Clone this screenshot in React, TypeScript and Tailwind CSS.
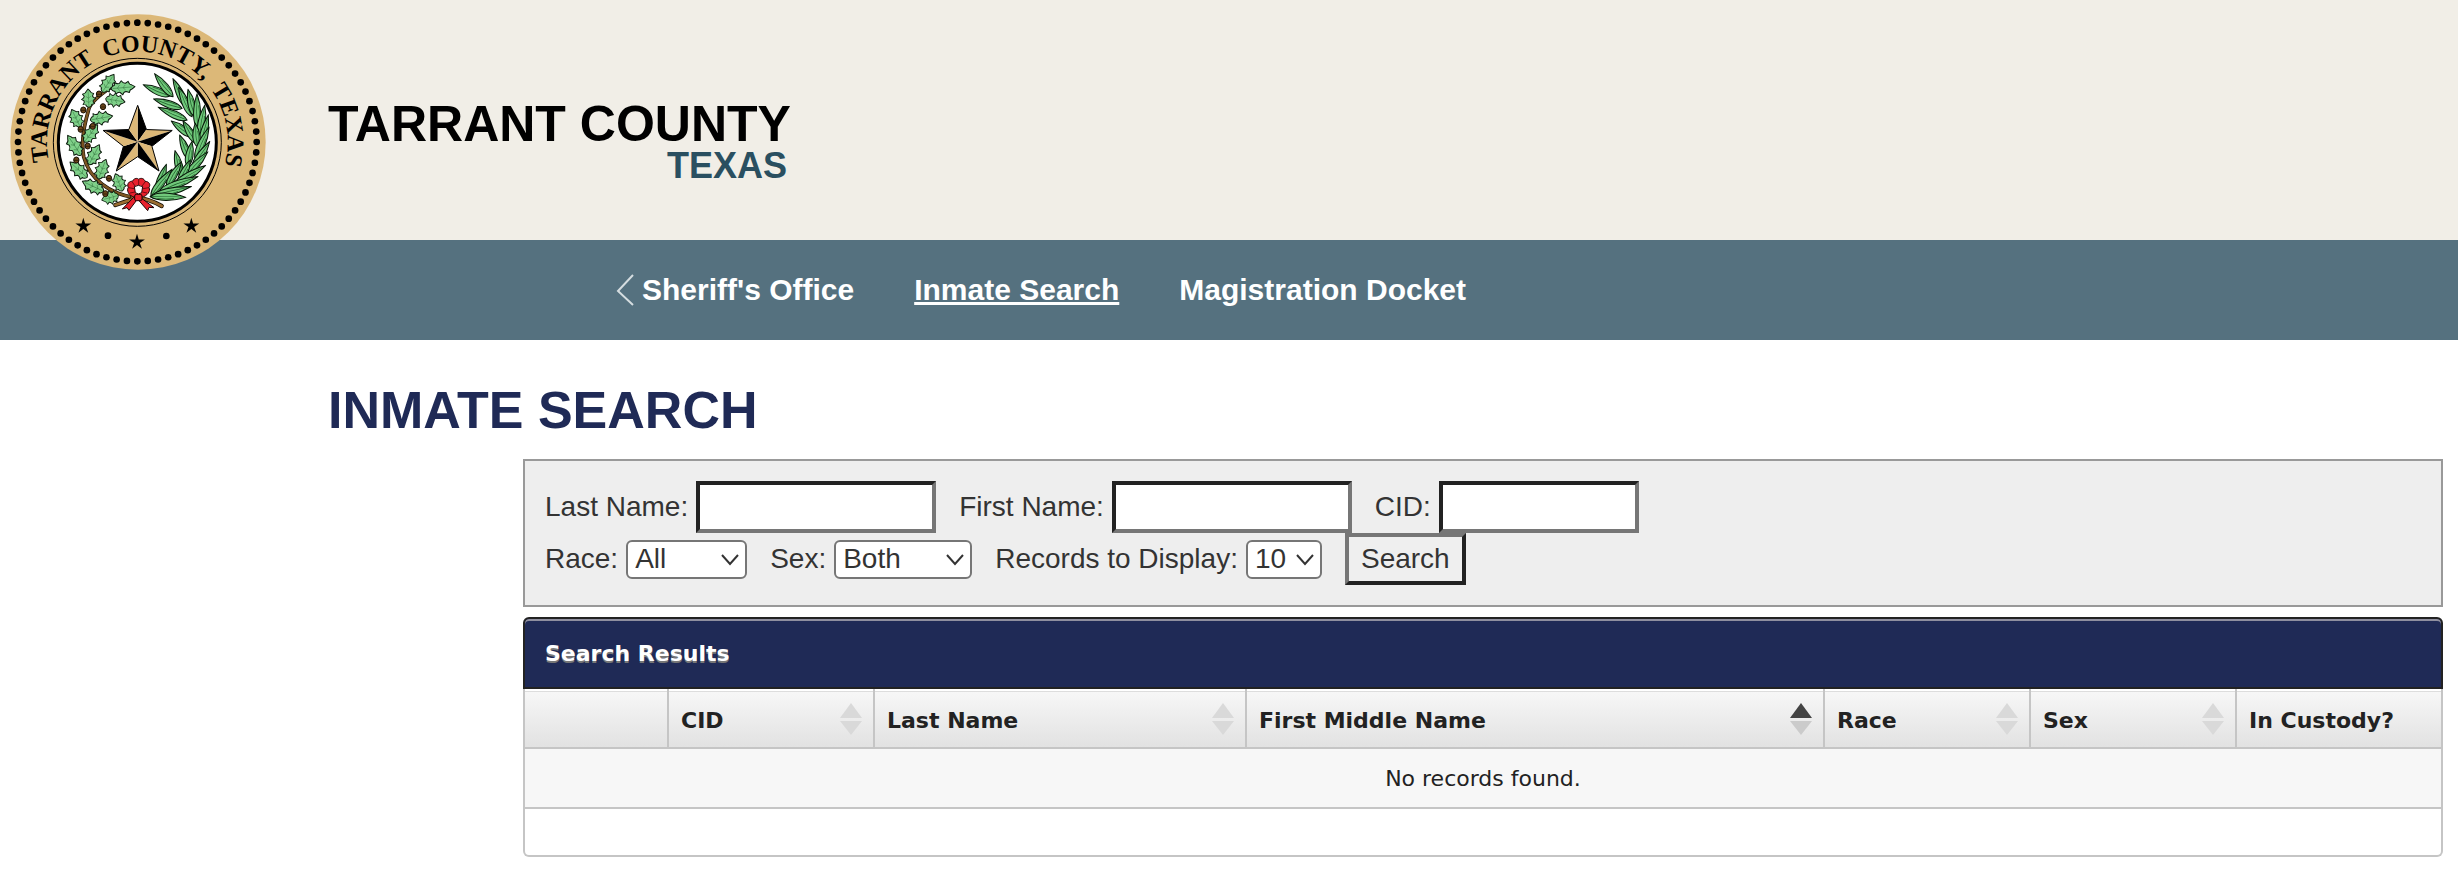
import React, { useState } from "react";

interface Column {
  label: string;
  width: string;
  sortable: boolean;
}

// [baseX, baseY, tipX, tipY]
type Leaf = [number, number, number, number];

const columns: Column[] = [
  { label: "", width: "w-36", sortable: false },
  { label: "CID", width: "w-[206px]", sortable: true },
  { label: "Last Name", width: "w-[372px]", sortable: true },
  { label: "First Middle Name", width: "", sortable: true },
  { label: "Race", width: "w-[206px]", sortable: true },
  { label: "Sex", width: "w-[206px]", sortable: true },
  { label: "In Custody?", width: "w-[208px]", sortable: false },
];

const oakLeaves: Leaf[] = [
  [306, 276, 341, 223],
  [332, 266, 404, 260],
  [316, 296, 374, 306],
  [266, 322, 263, 267],
  [270, 360, 337, 348],
  [240, 381, 214, 328],
  [252, 426, 292, 374],
  [242, 466, 202, 406],
  [266, 494, 297, 434],
  [260, 533, 209, 486],
  [294, 537, 317, 478],
  [310, 574, 246, 544],
  [366, 573, 345, 521],
  [354, 586, 304, 600],
];

const acorns = [
  [296, 282],
  [308, 320],
  [249, 330],
  [241, 388],
  [277, 379],
  [262, 438],
  [228, 480],
  [326, 535],
  [315, 581],
];

const oliveLeaves: Leaf[] = [
  [508, 288, 429, 254],
  [518, 290, 463, 221],
  [545, 325, 460, 297],
  [560, 322, 518, 236],
  [560, 360, 474, 322],
  [575, 350, 535, 262],
  [584, 350, 563, 268],
  [592, 385, 590, 282],
  [578, 410, 513, 363],
  [598, 410, 613, 316],
  [590, 430, 548, 362],
  [600, 450, 624, 345],
  [592, 440, 585, 370],
  [585, 480, 626, 382],
  [570, 480, 538, 405],
  [575, 510, 628, 425],
  [562, 500, 575, 425],
  [545, 530, 524, 452],
  [548, 540, 622, 456],
  [535, 555, 570, 480],
  [515, 560, 615, 497],
  [500, 560, 543, 486],
  [475, 575, 592, 530],
  [470, 575, 498, 493],
  [452, 588, 515, 508],
  [452, 590, 572, 560],
  [450, 590, 556, 592],
];

function leafTransform([x1, y1, x2, y2]: Leaf, thickness: number) {
  const length = Math.hypot(x2 - x1, y2 - y1);
  const angle = (Math.atan2(y2 - y1, x2 - x1) * 180) / Math.PI;
  return `translate(${x1} ${y1}) rotate(${angle}) scale(${length / 60} ${thickness})`;
}

function starPoints(cx: number, cy: number, outer: number, inner: number) {
  return Array.from({ length: 10 }, (_, i) => {
    const r = i % 2 === 0 ? outer : inner;
    const a = (i * Math.PI) / 5 - Math.PI / 2;
    return [cx + r * Math.cos(a), cy + r * Math.sin(a)];
  });
}

const CountySeal = () => {
  const star = starPoints(412, 425, 109, 45);
  const smallStars = [
    [249, 678],
    [573, 678],
    [410, 726],
  ];

  return (
    <svg
      viewBox="29 42 768 768"
      className="h-64 w-64"
      role="img"
      aria-label="Tarrant County seal"
    >
      <circle cx="413" cy="426" r="383" fill="#dcb878" />
      {Array.from({ length: 72 }, (_, i) => {
        const a = (i * Math.PI) / 36;
        return (
          <circle
            key={i}
            cx={411 + 358 * Math.sin(a)}
            cy={426 - 358 * Math.cos(a)}
            r="10"
          />
        );
      })}
      <circle cx="411" cy="427" r="252" fill="none" stroke="#000" strokeWidth="3" />
      <circle cx="411" cy="427" r="237" fill="#fff" stroke="#000" strokeWidth="9" />
      <path
        id="sealArc"
        d="M411 697A271 271 0 0 1 411 155A271 271 0 0 1 411 697"
        fill="none"
      />
      <g
        fontFamily="Liberation Serif, serif"
        fontWeight="700"
        fontSize="72"
        textAnchor="middle"
      >
        <text>
          <textPath href="#sealArc" startOffset="543">TARRANT</textPath>
        </text>
        <text>
          <textPath href="#sealArc" startOffset="913">COUNTY,</textPath>
        </text>
        <text>
          <textPath href="#sealArc" startOffset="1227">TEXAS</textPath>
        </text>
      </g>

      {/* oak branch */}
      <g fill="none" strokeLinecap="round">
        <path
          d="M400 592C330 582 268 538 250 470C240 410 258 355 266 325C275 303 298 285 332 262"
          stroke="#1b1206"
          strokeWidth="11"
        />
        <path
          d="M400 592C330 582 268 538 250 470C240 410 258 355 266 325C275 303 298 285 332 262"
          stroke="#7d5523"
          strokeWidth="7"
        />
      </g>
      {oakLeaves.map((leaf, i) => (
        <g key={i} transform={leafTransform(leaf, 1.25)}>
          <path
            d="M0 0Q4 -8 9 -7L10 -14Q17 -9 22 -11L27 -17Q31 -10 37 -10L44 -14Q46 -6 52 -5L60 0L52 5Q46 6 45 13L37 10Q31 10 28 17L22 11Q17 9 11 14L9 7Q4 8 0 0Z"
            fill="#7fd089"
            stroke="#0b1a0c"
            strokeWidth="2.4"
            strokeLinejoin="round"
          />
          <path
            d="M4 0H52M16 0L22 -7M16 0L22 7M30 0L36 -6M30 0L36 6"
            stroke="#2b6d37"
            strokeWidth="1.2"
            fill="none"
          />
        </g>
      ))}
      {acorns.map(([x, y]) => (
        <g key={`${x}-${y}`}>
          <ellipse cx={x} cy={y} rx="8" ry="9" fill="#6b451a" stroke="#1b1206" strokeWidth="3" />
          <path d={`M${x - 7} ${y + 1}H${x + 7}`} stroke="#1b1206" strokeWidth="2" />
        </g>
      ))}

      {/* olive branch */}
      {oliveLeaves.map((leaf, i) => (
        <g key={i} transform={leafTransform(leaf, 1.1)}>
          <path
            d="M0 0C10 -15 36 -13 60 0C38 12 12 13 0 0Z"
            fill="#70c87a"
            stroke="#08180a"
            strokeWidth="2.8"
            strokeLinejoin="round"
          />
          <path d="M3 0Q28 -4 54 0M12 5Q28 7 40 4" stroke="#1f5f2b" strokeWidth="1.8" fill="none" />
        </g>
      ))}

      {/* five pointed star, every arm split into a light and a dark facet */}
      {star.map((p, i) => {
        const next = star[(i + 1) % 10];
        return (
          <polygon
            key={i}
            points={`412,425 ${p.join(",")} ${next.join(",")}`}
            fill={i % 2 === 0 ? "#000" : "#dcb878"}
          />
        );
      })}
      <polygon
        points={star.map((p) => p.join(",")).join(" ")}
        fill="none"
        stroke="#000"
        strokeWidth="3"
      />

      {/* stems and ribbon */}
      <g strokeLinecap="round" fill="none">
        <path d="M345 615L420 590M396 590Q445 596 484 618" stroke="#1b1206" strokeWidth="13" />
        <path d="M345 615L420 590M396 590Q445 596 484 618" stroke="#9a6c31" strokeWidth="8" />
      </g>
      <path
        d="M400 592L366 627L380 623L386 631L408 602ZM420 592L461 623L446 622L442 632L416 602Z"
        fill="#e8202c"
        stroke="#1c0405"
        strokeWidth="3"
        strokeLinejoin="round"
      />
      <path
        d="M404 592C384 588 378 570 384 562C378 552 388 542 396 544C402 533 412 534 415 538C422 532 432 536 434 544C446 544 452 554 446 562C452 574 440 588 424 592Z"
        fill="#e8202c"
        stroke="#1c0405"
        strokeWidth="3"
      />
      <path
        d="M402 560Q414 552 427 560L424 578Q414 586 405 578Z"
        fill="#fff"
        stroke="#1c0405"
        strokeWidth="3"
      />
      <path
        d="M396 546L404 558M415 540V555M434 546L425 558M385 563L401 566M446 563L428 566M389 579L404 576M440 579L426 576"
        stroke="#5c070d"
        strokeWidth="2.5"
      />
      <rect x="403" y="583" width="22" height="19" rx="5" fill="#e8202c" stroke="#1c0405" strokeWidth="3" />

      {smallStars.map(([x, y]) => (
        <polygon
          key={x}
          points={starPoints(x, y, 25, 9).map((p) => p.join(",")).join(" ")}
        />
      ))}
      <circle cx="323" cy="707" r="10" />
      <circle cx="498" cy="708" r="10" />
    </svg>
  );
};

const SortIcon = ({ active }: { active: boolean }) => (
  <svg viewBox="0 0 24 34" className="h-[34px] w-6 shrink-0" aria-hidden="true">
    <path d="M12 0L23 15H1Z" fill={active ? "#444" : "#d9d9d9"} />
    <path d="M1 18H23L12 32Z" fill={active ? "#cbcbcb" : "#d9d9d9"} />
  </svg>
);

interface TextFieldProps {
  id: string;
  label: string;
  width: string;
}

const TextField = ({ id, label, width }: TextFieldProps) => (
  <div className="flex items-center gap-2">
    <label htmlFor={id}>{label}</label>
    <input
      id={id}
      type="text"
      className={`${width} h-[52px] border-4 border-t-[#222] border-l-[#222] border-r-[#767676] border-b-[#767676] bg-white px-2`}
    />
  </div>
);

interface SelectFieldProps {
  id: string;
  label: string;
  width: string;
  options: string[];
}

const SelectField = ({ id, label, width, options }: SelectFieldProps) => (
  <div className="flex items-center gap-2">
    <label htmlFor={id}>{label}</label>
    <div className="relative">
      <select
        id={id}
        className={`${width} block h-[39px] appearance-none rounded-md border-2 border-[#767676] bg-white pl-[7px] leading-8`}
      >
        {options.map((option) => (
          <option key={option}>{option}</option>
        ))}
      </select>
      <svg
        viewBox="0 0 18 12"
        className="pointer-events-none absolute top-3.5 right-2 h-3 w-[18px]"
        fill="none"
        stroke="#333"
        strokeWidth="2"
        aria-hidden="true"
      >
        <path d="M1 1L9 10L17 1" />
      </svg>
    </div>
  </div>
);

const App = () => {
  const [sortBy, setSortBy] = useState("First Middle Name");

  return (
    <div className="bg-white font-['Liberation_Sans',sans-serif] text-[#333]">
      <header className="relative">
        <div className="h-60 bg-[#f1eee7] pt-[101px] pl-[328px]">
          <div className="w-fit text-right font-bold">
            <p className="text-[50px] leading-[47px] text-black">TARRANT COUNTY</p>
            <p className="pr-1 text-4xl leading-9 text-[#2a4f60]">TEXAS</p>
          </div>
        </div>
        <nav className="flex h-[100px] items-center gap-[60px] bg-[#55717f] pl-[616px] text-3xl font-bold text-white">
          <a href="#sheriff" className="flex items-center gap-2">
            <svg
              viewBox="0 0 18 32"
              className="h-8 w-[18px]"
              fill="none"
              stroke="#d5dde0"
              strokeWidth="2"
              aria-hidden="true"
            >
              <path d="M17 1L2 17L17 31" />
            </svg>
            Sheriff's Office
          </a>
          <a href="#inmates" className="underline">
            Inmate Search
          </a>
          <a href="#docket">Magistration Docket</a>
        </nav>
        <a href="#home" className="absolute top-3.5 left-2.5">
          <CountySeal />
        </a>
      </header>

      <main className="pt-10">
        <h1 className="pl-[328px] text-[52px] leading-[60px] font-bold text-[#1f2a56]">
          INMATE SEARCH
        </h1>

        <div className="mt-[19px] mr-[15px] ml-[523px]">
          <form
            className="border-2 border-[#999] bg-[#eee] p-5 text-[28px]"
            onSubmit={(e) => e.preventDefault()}
          >
            <div className="flex flex-wrap items-center gap-x-[23px]">
              <TextField id="lastName" label="Last Name:" width="w-60" />
              <TextField id="firstName" label="First Name:" width="w-60" />
              <TextField id="cid" label="CID:" width="w-[200px]" />
            </div>
            <div className="flex flex-wrap items-center gap-x-[23px]">
              <SelectField
                id="race"
                label="Race:"
                width="w-[121px]"
                options={["All", "Asian", "Black", "White"]}
              />
              <SelectField
                id="sex"
                label="Sex:"
                width="w-[138px]"
                options={["Both", "Female", "Male"]}
              />
              <SelectField
                id="records"
                label="Records to Display:"
                width="w-[76px]"
                options={["10", "25", "50"]}
              />
              <button
                type="submit"
                className="h-[52px] border-4 border-t-[#767676] border-l-[#767676] border-r-[#222] border-b-[#222] bg-[#efefef] px-3"
              >
                Search
              </button>
            </div>
          </form>

          <section className="mt-2.5 font-['DejaVu_Sans',sans-serif] text-[22px] text-[#222]">
            <h2 className="flex h-[72px] items-center rounded-t-md border-2 border-[#222] bg-[#1f2a56] px-5 font-bold text-white shadow-[inset_0_2px_0_#8f8f9f] text-shadow-[0_2px_0_#777]">
              Search Results
            </h2>
            <table className="w-full table-fixed border-separate border-spacing-0">
              <thead>
                <tr>
                  {columns.map((column) => (
                    <th
                      key={column.label}
                      className={`${column.width} h-[60px] border-b-2 border-l-2 border-[#c5c5c5] bg-linear-to-b from-[#f8f8f8] to-[#e2e2e2] px-0 pt-1 pb-0 shadow-[inset_0_2px_0_#fff,inset_0_3px_0_#ddd] last:border-r-2`}
                    >
                      {column.sortable ? (
                        <button
                          type="button"
                          onClick={() => setSortBy(column.label)}
                          className="flex w-full items-center justify-between pr-2.5 pl-3 text-left font-bold"
                        >
                          {column.label}
                          <SortIcon active={sortBy === column.label} />
                        </button>
                      ) : (
                        <div className="pr-2.5 pl-3 text-left">{column.label}</div>
                      )}
                    </th>
                  ))}
                </tr>
              </thead>
              <tbody>
                <tr>
                  <td
                    colSpan={columns.length}
                    className="h-[60px] border-x-2 border-b-2 border-[#c5c5c5] bg-[#f7f7f7] p-0 text-center"
                  >
                    No records found.
                  </td>
                </tr>
              </tbody>
            </table>
            <div className="h-12 rounded-b-md border-2 border-t-0 border-[#c5c5c5]" />
          </section>
        </div>
      </main>
    </div>
  );
};

export default App;
